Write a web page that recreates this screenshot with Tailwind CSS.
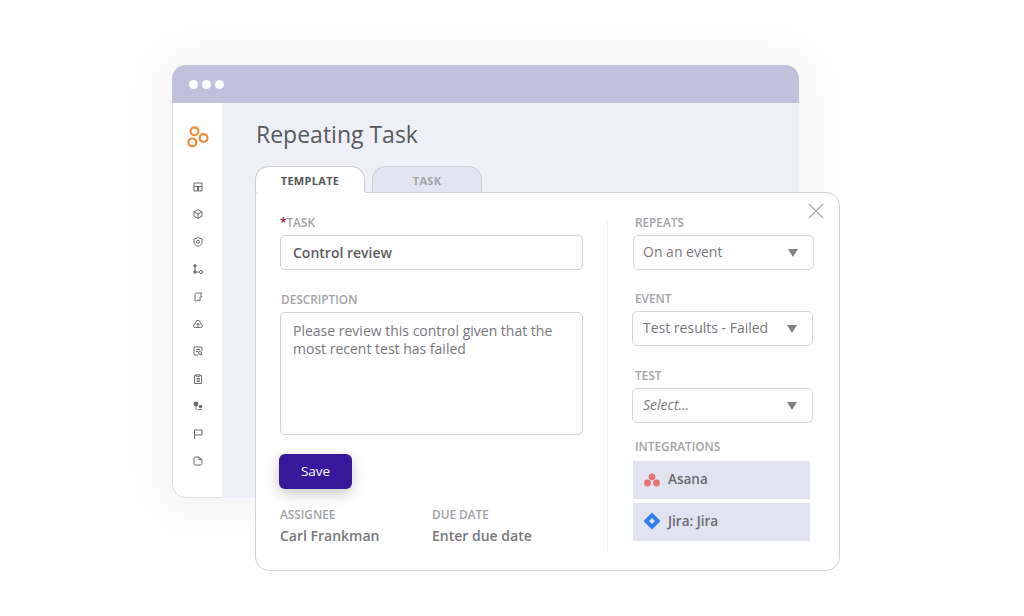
<!DOCTYPE html>
<html><head><meta charset="utf-8"><script src="https://cdn.jsdelivr.net/npm/@tailwindcss/browser@4"></script></head>
<body class="bg-white">
<div class="relative w-[1024px] h-[616px] overflow-hidden bg-white font-['Open_Sans',sans-serif]">
  <!-- back window -->
  <div class="absolute left-[172px] top-[65px] w-[627px] h-[433px] rounded-[14px] bg-white shadow-[0_0_44px_18px_rgba(0,0,0,0.045)] overflow-hidden flex flex-col">
    <div class="h-[38px] shrink-0 bg-[#c0c1dd] flex items-center gap-[4px] pl-[17px]">
      <span class="w-[9px] h-[9px] rounded-full bg-white"></span><span class="w-[9px] h-[9px] rounded-full bg-white"></span><span class="w-[9px] h-[9px] rounded-full bg-white"></span>
    </div>
    <div class="flex flex-1">
      <div class="w-[50px] shrink-0 bg-white border-l border-b border-[#dcdcdf] rounded-bl-[14px] flex flex-col items-center">
        <svg class="mt-[22px]" width="24" height="24" viewBox="0 0 24 24" fill="none" stroke="#f08a34" stroke-width="2.2"><circle cx="8.5" cy="6.3" r="3.9"/><circle cx="17.6" cy="13" r="3.9"/><circle cx="6.3" cy="17.4" r="3.9"/></svg>
        <div class="mt-[33px] flex flex-col gap-[17.4px] text-[#6d6d72]">
          <svg width="10" height="10" viewBox="0 0 10 10" fill="none" stroke="currentColor" stroke-width="1"><path d="M1 1h8v3.500H1zM1 4.500v4.500h3.500V4.500M5.500 4.500V9H9V4.500"/></svg>
          <svg width="10" height="10" viewBox="0 0 10 10" fill="none" stroke="currentColor" stroke-width="1"><path d="M5 .7 9 2.800v4.400L5 9.300 1 7.200V2.800zM1 2.800l4 2.200 4-2.200M5 5v4.300"/></svg>
          <svg width="10" height="10" viewBox="0 0 10 10" fill="none" stroke="currentColor" stroke-width="1"><path d="M5 .6 9 2v3c0 2.200-1.800 3.700-4 4.400C2.800 8.700 1 7.200 1 5V2z"/><circle cx="5" cy="4.800" r="1.500"/></svg>
          <svg width="10" height="10" viewBox="0 0 10 10" fill="none" stroke="currentColor" stroke-width="1"><circle cx="2" cy="1.800" r="1.200" fill="currentColor"/><circle cx="2" cy="8" r="1.200" fill="currentColor"/><path d="M2 3v4M3.200 8H6"/><circle cx="8" cy="8" r="1.500"/></svg>
          <svg width="10" height="10" viewBox="0 0 10 10" fill="none" stroke="currentColor" stroke-width="1"><path d="M2 9V2.500Q2 1 3.500 1H9L7.500 3 9 5H7v4L5 7.800 3.500 9z"/></svg>
          <svg width="10" height="10" viewBox="0 0 10 10" fill="none" stroke="currentColor" stroke-width="1"><path d="M2.500 8.500Q.5 8.500.5 6.700T2.300 4.800Q2.700 1.200 5 1.200T7.700 4.800Q9.500 5 9.500 6.700T7.500 8.500z"/><path d="M5 8.500V4.500M3.500 6 5 4.500 6.500 6"/></svg>
          <svg width="10" height="10" viewBox="0 0 10 10" fill="none" stroke="currentColor" stroke-width="1"><path d="M9 5V1H1v8h4M3 3.500h4M3 5.500h2"/><circle cx="7" cy="7" r="1.500"/><path d="m8 8 1.300 1.300"/></svg>
          <svg width="10" height="10" viewBox="0 0 10 10" fill="none" stroke="currentColor" stroke-width="1"><path d="M3 1.500H1.500v8h7v-8H7M3 .8h4v1.500H3zM3.500 4.500H7M3.500 6H7M3.500 7.500H7"/></svg>
          <svg width="10" height="10" viewBox="0 0 10 10" fill="currentColor"><circle cx="3" cy="3" r="2.400"/><path d="M3 5v4" stroke="currentColor"/><circle cx="7.500" cy="5.500" r="1.800"/><path d="M5 8h4v1H5z"/></svg>
          <svg width="10" height="10" viewBox="0 0 10 10" fill="none" stroke="currentColor" stroke-width="1"><path d="M1.500 10V1H9v5H1.500"/></svg>
          <svg width="10" height="10" viewBox="0 0 10 10" fill="none" stroke="currentColor" stroke-width="1"><path d="M1 7.500V2.500Q1 1 2.500 1H6l3 2.500v4Q9 9 7.500 9h-5Q1 9 1 7.500zM6 1v2.500h3"/></svg>
        </div>
      </div>
      <div class="flex-1 bg-[#eff0f7] pl-[34px] pt-[16px]">
        <h1 class="text-[23px] leading-[30px] font-medium text-[#58595d]">Repeating Task</h1>
        <div class="mt-[17px] -ml-px flex gap-[7px]">
          <div class="w-[110px] h-[28px] rounded-t-[14px] bg-white border border-b-0 border-[#ccccd2] flex items-center justify-center text-[11px] font-bold tracking-[0.3px] text-[#555559] pt-[2px]">TEMPLATE</div>
          <div class="w-[110px] h-[27px] rounded-t-[14px] bg-[#e2e4f1] border border-b-0 border-[#cdced8] flex items-center justify-center text-[11px] font-bold tracking-[0.3px] text-[#a3a3a9] pt-[3px]">TASK</div>
        </div>
      </div>
    </div>
  </div>

  <!-- modal -->
  <div class="absolute left-[255px] top-[192px] w-[585px] h-[379px] rounded-[14px] rounded-tl-none bg-white border border-[#d2d2d6] flex">
    <div class="absolute left-[1px] top-[-1px] w-[108px] h-[2px] bg-white"></div>
    <svg class="absolute right-[15px] top-[10px]" width="16" height="16" viewBox="0 0 16 16" fill="none" stroke="#a9a9ad" stroke-width="1.400"><path d="M1 1l14 14M15 1 1 15"/></svg>
    <div class="w-[352px] shrink-0 h-[330px] mt-[28px] border-r border-[#f0f0f2] pl-[24px] pr-[24px]">
      <div class="-mt-[6px] text-[11.8px] leading-[14px] font-semibold text-[#a2a2a6]"><span class="text-[#a3323f] font-bold">*</span>TASK</div>
      <div class="mt-[6px] w-[303px] h-[35px] rounded-[5px] border border-[#d2d2d6] flex items-center pl-[12px] text-[14px] font-semibold text-[#5c5c60]"><span class="-mt-[1px]">Control review</span></div>
      <div class="mt-[22px] ml-px text-[11.8px] leading-[14px] font-semibold text-[#a2a2a6]">DESCRIPTION</div>
      <div class="mt-[6px] w-[303px] h-[123px] rounded-[5px] border border-[#d2d2d6] pl-[12px] pt-[9px] text-[14px] leading-[18px] text-[#77777b]">Please review this control given that the<br>most recent test has failed</div>
      <button class="mt-[19px] -ml-px block w-[73px] h-[35px] rounded-[6px] bg-[#37189a] text-white text-[13.5px] font-medium shadow-[0_5px_14px_rgba(0,0,0,0.22)]">Save</button>
      <div class="mt-[18px] flex">
        <div class="w-[152px]">
          <div class="text-[11.8px] leading-[14px] font-semibold text-[#a2a2a6]">ASSIGNEE</div>
          <div class="mt-[6px] text-[14px] leading-[18px] font-semibold text-[#77777b]">Carl Frankman</div>
        </div>
        <div>
          <div class="text-[11.8px] leading-[14px] font-semibold text-[#a2a2a6]">DUE DATE</div>
          <div class="mt-[6px] text-[14px] leading-[18px] font-semibold text-[#77777b]">Enter due date</div>
        </div>
      </div>
    </div>
    <div class="pl-[25px] pt-[22px] w-[206px]">
      <div class="ml-[2px] text-[11.8px] leading-[14px] font-semibold text-[#a2a2a6]">REPEATS</div>
      <div class="mt-[6px] w-[181px] h-[35px] rounded-[5px] border border-[#d8d8dc] flex items-center justify-between pl-[9px] pr-[15px] text-[14px] text-[#77777b]"><span class="-mt-[2px]">On an event</span><svg width="10" height="8" viewBox="0 0 10 8" fill="#808085"><path d="M0 0h10L5 8z"/></svg></div>
      <div class="mt-[21px] ml-[2px] text-[11.8px] leading-[14px] font-semibold text-[#a2a2a6]">EVENT</div>
      <div class="mt-[6px] -ml-px w-[181px] h-[35px] rounded-[5px] border border-[#d8d8dc] flex items-center justify-between pl-[10px] pr-[15px] text-[14px] text-[#77777b]"><span class="-mt-[2px]">Test results - Failed</span><svg width="10" height="8" viewBox="0 0 10 8" fill="#808085"><path d="M0 0h10L5 8z"/></svg></div>
      <div class="mt-[22px] ml-[2px] text-[11.8px] leading-[14px] font-semibold text-[#a2a2a6]">TEST</div>
      <div class="mt-[6px] -ml-px w-[181px] h-[35px] rounded-[5px] border border-[#d8d8dc] flex items-center justify-between pl-[10px] pr-[15px] text-[14px] italic text-[#77777b]"><span class="-mt-[2px]">Select...</span><svg width="10" height="8" viewBox="0 0 10 8" fill="#808085"><path d="M0 0h10L5 8z"/></svg></div>
      <div class="mt-[16px] ml-[2px] text-[11.8px] leading-[14px] font-semibold text-[#a2a2a6]">INTEGRATIONS</div>
      <div class="mt-[8px] w-[177px] h-[38px] bg-[#e1e3f0] flex items-center pl-[11px] gap-[8px] text-[13.5px] font-semibold text-[#6a6a70]">
        <svg width="16" height="14" viewBox="0 0 16 14" fill="#e57373"><circle cx="8" cy="3.800" r="3.400"/><circle cx="3.500" cy="10" r="3.400"/><circle cx="12.500" cy="10" r="3.400"/></svg><span class="-mt-[2px]">Asana</span></div>
      <div class="mt-[4px] w-[177px] h-[38px] bg-[#e1e3f0] flex items-center pl-[10px] gap-[7px] text-[13.5px] font-semibold text-[#6a6a70]">
        <svg class="-mt-[3px]" width="18" height="18" viewBox="0 0 18 18"><path fill="#2f7bf0" fill-rule="evenodd" d="M9 .5 17.500 9 9 17.500.5 9zM9 6 6 9l3 3 3-3z"/></svg><span class="-mt-[2px]">Jira: Jira</span></div>
    </div>
  </div>
</div>
</body></html>
